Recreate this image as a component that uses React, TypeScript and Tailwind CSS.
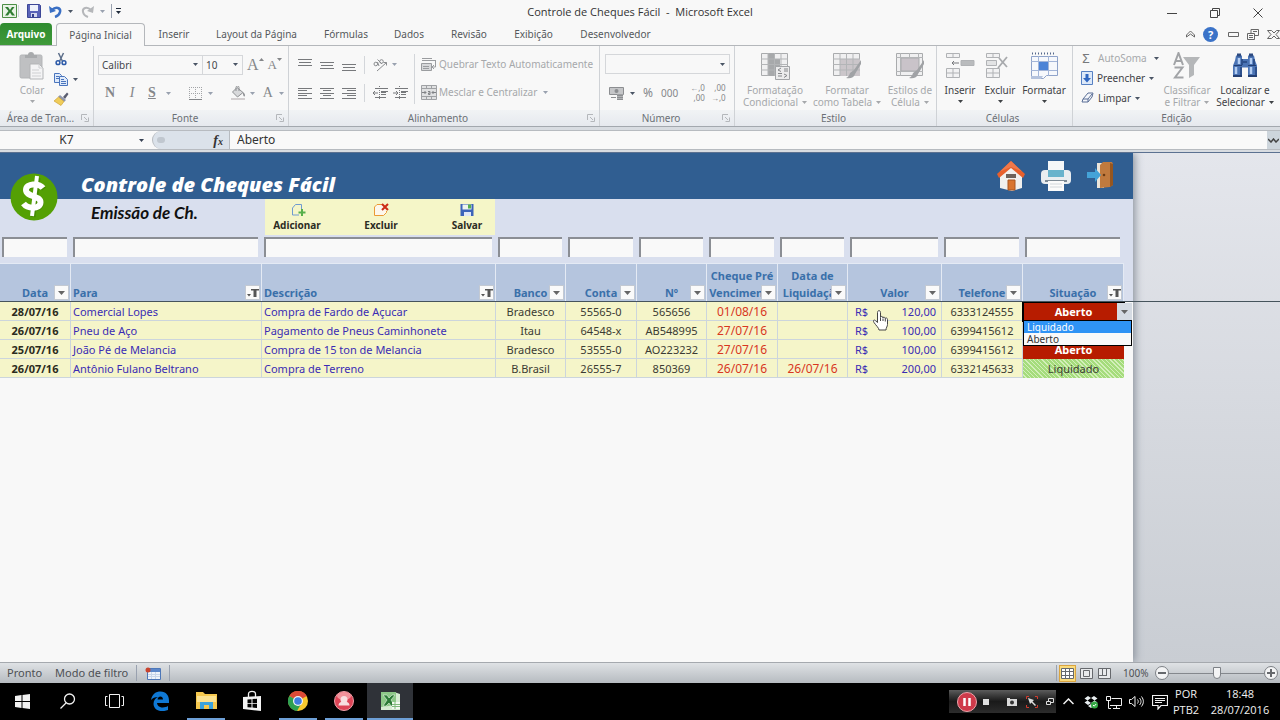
import type { ReactNode } from "react";
import { clsx } from "clsx";

/* ---------- small shared pieces ---------- */

function Caret({ className = "text-gray-600" }: { className?: string }) {
  return (
    <svg viewBox="0 0 5 3" className={clsx("h-[3px] w-[5px] shrink-0", className)} fill="currentColor">
      <path d="M0 0h5L2.5 3z" />
    </svg>
  );
}

function Launcher() {
  return (
    <svg viewBox="0 0 8 8" className="h-2 w-2" fill="none" stroke="#b4b7bb">
      <path d="M.5 6V.5H6M3 3l3 3M7.500 3.500V7.500H3.500" />
    </svg>
  );
}

function Separator() {
  return <span className="h-[18px] w-px shrink-0 bg-[#d3d6da]" />;
}

interface GroupProps {
  label: string;
  className: string;
  bodyClassName?: string;
  launcher?: boolean;
  children: ReactNode;
}

function Group({ label, className, bodyClassName, launcher, children }: GroupProps) {
  return (
    <section className={clsx("flex shrink-0 flex-col border-r border-[#cfd2d6]", className)}>
      <div className={clsx("h-[64px] pt-1.5", bodyClassName)}>{children}</div>
      <div className="flex h-4 items-center bg-gradient-to-b from-[#f1f3f5] to-[#e6e9ee] pr-1">
        <span className="flex-1 whitespace-nowrap text-center text-[#6b7076]">{label}</span>
        {launcher && (
          <button aria-label={`Opções de ${label}`}>
            <Launcher />
          </button>
        )}
      </div>
    </section>
  );
}

interface BigButtonProps {
  icon: ReactNode;
  lines: string[];
  disabled?: boolean;
  className?: string;
}

function BigButton({ icon, lines, disabled, className }: BigButtonProps) {
  const last = lines.length - 1;
  return (
    <button
      className={clsx(
        "flex shrink-0 flex-col items-center whitespace-nowrap leading-3",
        disabled ? "text-[#a6a8ab]" : "text-[#3f4246]",
        className,
      )}
    >
      <span className="mb-1 flex h-7 items-center">{icon}</span>
      {lines.map((line, i) => (
        <span key={line} className="flex items-center gap-1">
          {line}
          {i === last && last > 0 && <Caret className="text-current" />}
        </span>
      ))}
      {last === 0 && <Caret className="mt-1 text-current" />}
    </button>
  );
}

/* ---------- ribbon icons ---------- */

function AlignIcon({ rows }: { rows: [number, number, number][] }) {
  return (
    <svg viewBox="0 0 14 14" className="h-[14px] w-[14px]" stroke="#77797c">
      {rows.map(([x1, x2, y]) => (
        <path key={y} d={`M${x1} ${y}.5H${x2}`} />
      ))}
    </svg>
  );
}

const topAlign: [number, number, number][] = [[0, 14, 1], [1, 13, 4], [0, 14, 7]];
const middleAlign: [number, number, number][] = [[0, 14, 4], [1, 13, 7], [0, 14, 10]];
const bottomAlign: [number, number, number][] = [[0, 14, 6], [1, 13, 9], [0, 14, 12]];
const leftAlign: [number, number, number][] = [[0, 14, 2], [0, 9, 4], [0, 14, 7], [0, 9, 9], [0, 14, 12]];
const centerAlign: [number, number, number][] = [[0, 14, 2], [3, 11, 4], [0, 14, 7], [3, 11, 9], [0, 14, 12]];
const rightAlign: [number, number, number][] = [[0, 14, 2], [5, 14, 4], [0, 14, 7], [5, 14, 9], [0, 14, 12]];

function IndentIcon({ flip }: { flip?: boolean }) {
  return (
    <svg viewBox="0 0 16 14" className="h-[14px] w-4" fill="none" stroke="#77797c">
      <path d="M6.500 0v14" strokeDasharray="1 1" />
      <path d="M2 2.500h13M8 5.500h7M8 8.500h5M2 11.500h11" />
      <path d="M8 6.500h5" />
      <path d={flip ? "M0 7h5M3 5l2 2-2 2" : "M5 7H0M2 5L0 7l2 2"} />
    </svg>
  );
}

function PasteIcon() {
  return (
    <svg viewBox="0 0 26 28" className="h-7 w-[26px]">
      <rect x="1" y="3" width="22" height="23" rx="1.500" fill="#bfc0c2" stroke="#b3b5b7" />
      <path d="M6 6V3h3a3 3 0 0 1 6 0h3v3z" fill="#a8aaac" />
      <path d="M11 12h9l4 4v11H11z" fill="#f4f4f5" stroke="#b3b5b7" />
      <path d="M20 12v4h4M13 18h7M13 21h9M13 24h9" stroke="#cfd0d2" fill="none" />
    </svg>
  );
}

function CutIcon() {
  return (
    <svg viewBox="0 0 12 14" className="h-[14px] w-3" fill="none" strokeWidth="1.500">
      <path d="M3.500 1l3.800 8M8.500 1L4.700 9" stroke="#5d6f8a" />
      <circle cx="3" cy="10.700" r="1.900" stroke="#2c5aa8" />
      <circle cx="9" cy="10.700" r="1.900" stroke="#2c5aa8" />
    </svg>
  );
}

function CopyIcon() {
  return (
    <svg viewBox="0 0 16 14" className="h-[14px] w-4" stroke="#4a75bd">
      <path d="M1.500 1.500h5l2 2v7h-7z" fill="#dfeafa" />
      <path d="M3 4.500h3M3 6.500h4" />
      <path d="M6.500 4.500h5l3 3v6h-8z" fill="#dfeafa" />
      <path d="M8 7.500h3M8 9.500h5M8 11.500h5" />
    </svg>
  );
}

function BrushIcon() {
  return (
    <svg viewBox="0 0 16 14" className="h-[14px] w-4">
      <path d="M10 5l4-4.500 1.500 1.500L12 7z" fill="#5a5d70" />
      <path d="M7 3l6 5-2 2-6-5z" fill="#8f96ac" />
      <path d="M5.500 5L11 9.500 8 13.500 1 9z" fill="#f0cd5a" stroke="#c99b2a" strokeWidth=".6" />
    </svg>
  );
}

function BorderIcon() {
  return (
    <svg viewBox="0 0 13 13" className="h-[13px] w-[13px]" stroke="#a3a5a8" fill="none">
      <path d="M.5 0v12M6.500 0v12M12.500 0v12M0 .5h13M0 6.500h13" strokeDasharray="1 1" />
      <path d="M0 12.500h13" stroke="#85878a" />
    </svg>
  );
}

function BucketIcon() {
  return (
    <svg viewBox="0 0 15 14" className="h-[14px] w-[15px]">
      <path d="M6 1.500l6 5-5.500 4.500-5-5z" fill="#d8d9db" stroke="#8e9093" />
      <path d="M5 5V1.500a1.500 1.500 0 0 1 3 0V5" stroke="#8e9093" fill="none" />
      <path d="M12 6c2 2 2.500 3 1.500 4.500C12 10.500 12 8 12 6z" fill="#8e9093" />
      <path d="M0 12h14v2H0z" fill="#d3cfd0" />
    </svg>
  );
}

function OrientationIcon() {
  return (
    <svg viewBox="0 0 15 14" className="h-[14px] w-[15px]" fill="none" stroke="#8a8c8f">
      <path d="M4 13L13.500 4.500M13.500 4.500h-3M13.500 4.500v3" />
      <circle cx="2.800" cy="6" r="1.800" />
      <path d="M4.500 4l1.500 4M4.500 1.500L9 6" />
      <circle cx="8.500" cy="3.500" r="1.800" />
    </svg>
  );
}

function WrapIcon() {
  return (
    <svg viewBox="0 0 16 15" className="h-[15px] w-4 shrink-0" fill="none" stroke="#9a9c9f">
      <path d="M1 1.500h10M1 3.500h14" />
      <path d="M.5 6.500h10v7H.5z" fill="#d7d8da" />
      <path d="M2 9.500h6M2 11.500h6" />
      <path d="M14.500 4v6h-3M13 8l-2 2 2 2" />
    </svg>
  );
}

function MergeIcon() {
  return (
    <svg viewBox="0 0 16 15" className="h-[15px] w-4 shrink-0" fill="none" stroke="#9fa1a4">
      <path d="M.5.5h15v14H.5z" fill="#e0e1e2" />
      <path d="M0 3.500h16M0 11.500h16M5.500 0v3M10.500 0v3M5.500 12v3M10.500 12v3" />
      <path d="M1 7.500h4M3.500 6L5 7.500 3.500 9M15 7.500h-4M12.500 6L11 7.500 12.500 9M7 6.500h2v3H7.500v-1.500H9" stroke="#808285" />
    </svg>
  );
}

function MoneyIcon() {
  return (
    <svg viewBox="0 0 17 15" className="h-[15px] w-[17px]">
      <path d="M.5 1.500h14v7H.5z" fill="#c5c6c8" stroke="#8c8e91" />
      <circle cx="7.500" cy="5" r="2" fill="#8c8e91" />
      <path d="M8 8.500h6v5H8z" fill="#b1b3b5" />
      <path d="M8 9.500h6M8 11.500h6M8 13.500h6M2 11.500h5" stroke="#8c8e91" />
    </svg>
  );
}

function DecimalButton({ grow }: { grow?: boolean }) {
  return (
    <button
      className="flex flex-col text-right text-[8px] leading-[10px] text-[#85878a]"
      aria-label={grow ? "Aumentar casas decimais" : "Diminuir casas decimais"}
    >
      <span>{grow ? "←,0" : ",00"}</span>
      <span>{grow ? ",00" : "→,0"}</span>
    </button>
  );
}

function GridIcon({ variant }: { variant: "conditional" | "table" | "styles" }) {
  return (
    <svg viewBox="0 0 30 28" className="h-7 w-[30px]">
      <path d="M1.500 1.500h26v22h-26z" fill="#f0f0f1" stroke="#a9abad" />
      {variant === "conditional" && <path d="M8 2h6v5h6v10h-6v7H8z" fill="#a7a9ab" />}
      {variant === "table" && <path d="M8 7h20v17H8z" fill="#cbc6ca" />}
      {variant === "styles" && <path d="M6 6h18v13H6z" fill="#c9c3c9" stroke="#a9abad" />}
      <path
        d={variant === "styles" ? "M5.500 1v4M14.500 1v4M23.500 1v4M1 5.500h27M1 19.500h27M5.500 5v19" : "M8 1v23M14.500 1v23M21 1v23M1 7h27M1 12.500h27M1 18h27"}
        stroke="#b3b5b7"
      />
      {variant === "conditional" ? (
        <g>
          <path d="M15.500 14.500h14v13h-14z" fill="#ececed" stroke="#a3a5a8" />
          <path d="M21 16l-3 2 3 1.500M18 21.500h4M18 24h4M24 17h4M24 19h4M24 22l3 1.500-3 2" stroke="#85878a" fill="none" />
        </g>
      ) : (
        <path d="M29 8l-7 10-4 3c-1 3-2 4-4 5 4 1 8 0 9-4l6-10z" fill="#a0a2a5" />
      )}
    </svg>
  );
}

function CellsIcon({ variant }: { variant: "insert" | "delete" }) {
  return (
    <svg viewBox="0 0 30 28" className="h-7 w-[30px]" fill="none" stroke="#b0b2b5">
      <path d="M1.500 1.500h13v4h-13zM8 1v4M1.500 16.500h13v9h-13zM8 16v9M1 21h14" fill="#f2f2f3" />
      {variant === "insert" ? (
        <g>
          <path d="M16 8.500h13v5H16z" fill="#b9bbbd" />
          <path d="M14 11H7M9 9l-2 2 2 2" stroke="#77797c" />
        </g>
      ) : (
        <g>
          <path d="M1.500 8.500h10v5h-10z" fill="#e2e3e4" />
          <path d="M14 6l8 9M22 5l-9 11" stroke="#a8aaad" strokeWidth="1.800" />
        </g>
      )}
    </svg>
  );
}

function FormatIcon() {
  return (
    <svg viewBox="0 0 30 28" className="h-7 w-[30px]">
      <path d="M3 1.500h23" stroke="#55688c" strokeWidth="2" strokeDasharray="1 2" />
      <path d="M2.500 4.500h26v19h-11l-3 3h-12z" fill="#f6f8fc" stroke="#8fa3ca" />
      <path d="M9.500 4v20M19.500 4v20M2 9.500h26M2 18.500h26" stroke="#a3b5d8" />
      <path d="M10 10h9v8h-9z" fill="#4c83d6" />
      <path d="M2 24h12l-2 3H2z" fill="#b4c2dd" />
    </svg>
  );
}

function SortIcon() {
  return (
    <svg viewBox="0 0 30 28" className="h-7 w-[30px]">
      <path d="M2 13L6.500 1 11 13M3.500 9h6" fill="none" stroke="#a2a4a7" strokeWidth="2" />
      <path d="M2.500 15.500h8L3 25.500h8.500" fill="none" stroke="#a2a4a7" strokeWidth="2" />
      <path d="M11 5h17l-6 8v10l-5 3V13z" fill="#b5b7b9" />
    </svg>
  );
}

function BinocularsIcon() {
  return (
    <svg viewBox="0 0 28 28" className="h-7 w-7">
      <path d="M5 3.500h6V7h6V3.500h6l1 5 2 5v11h-9v-9h-6v9H2v-11l2-5z" fill="#4a73b4" />
      <path d="M6 1.500h4v3H6zM18 1.500h4v3h-4z" fill="#2d4a80" />
      <path d="M5 15v7M8 6v6M20 15v7M20 6v6" stroke="#b3cdf2" strokeWidth="2.500" />
      <path d="M10 15v8M25 15v8M11 7v6M23 7v6M12 10h4" stroke="#24467f" strokeWidth="1.500" />
      <path d="M2 23h9v2H2zM17 23h9v2h-9zM3 13h8v1H3zM17 13h8v1h-8z" fill="#233f73" />
    </svg>
  );
}

/* ---------- title bar and tabs ---------- */

function TitleBar() {
  return (
    <header className="flex h-[22px] items-center px-0.5">
      <div className="flex flex-1 items-center">
        <svg viewBox="0 0 16 16" className="h-4 w-4">
          <path d="M.5 1.500h14v13H.5z" fill="#e9f3e6" stroke="#4c8f45" />
          <path d="M3 4h3l2 3 2-3h2.500L9.500 8l3.500 4.500h-3L8 9.500 6 12.500H3L6.500 8z" fill="#2f7d32" />
        </svg>
        <span className="h-3 w-px bg-gray-300" />
        <button aria-label="Salvar arquivo" className="ml-2">
          <svg viewBox="0 0 14 14" className="h-[14px] w-[14px]">
            <path d="M.5.5h12l1 1v12H.5z" fill="#5a63b8" stroke="#3c4696" />
            <path d="M3 1h8v6H3z" fill="#eef1fa" />
            <path d="M4 9h6v4H4z" fill="#d5d9ee" />
            <path d="M5 10h2v3H5z" fill="#343e8c" />
          </svg>
        </button>
        <button aria-label="Desfazer" className="ml-2 flex items-center gap-1.5">
          <svg viewBox="0 0 13 13" className="h-[13px] w-[13px]" fill="none">
            <path d="M3 5c4-4 9-2 8 2-.5 2-2 4-5 5" stroke="#3a6fc4" strokeWidth="2.500" />
            <path d="M0 1l1 7 6-2z" fill="#3a6fc4" />
          </svg>
          <Caret />
        </button>
        <button aria-label="Refazer" className="ml-2 flex items-center gap-1.5">
          <svg viewBox="0 0 13 13" className="h-[13px] w-[13px]" fill="none">
            <path d="M10 5C6 1 1 3 2 7c.5 2 2 4 5 5" stroke="#b5b7ba" strokeWidth="2" />
            <path d="M13 1l-1 7-6-2z" fill="#b5b7ba" />
          </svg>
          <Caret className="text-gray-400" />
        </button>
        <span className="ml-1.5 h-3.5 w-px bg-gray-400" />
        <button aria-label="Personalizar barra" className="ml-1 flex flex-col gap-0.5">
          <span className="h-px w-[5px] bg-gray-800" />
          <Caret className="text-gray-800" />
        </button>
      </div>
      <h1 className="pt-0.5 font-['Open_Sans',sans-serif] text-[11px] text-[#333]">
        Controle de Cheques Fácil&nbsp; -&nbsp; Microsoft Excel
      </h1>
      <div className="flex flex-1 items-center justify-end gap-[33px] pt-1">
        <button aria-label="Minimizar">
          <svg viewBox="0 0 10 10" className="h-2.5 w-2.5" stroke="#444"><path d="M0 5.500h10" /></svg>
        </button>
        <button aria-label="Restaurar">
          <svg viewBox="0 0 10 10" className="h-2.5 w-2.5" stroke="#444" fill="none">
            <path d="M.5 2.500h7v7h-7zM2.500 2V.5h7v7H8" />
          </svg>
        </button>
        <button aria-label="Fechar" className="mr-[15px]">
          <svg viewBox="0 0 10 10" className="h-2.5 w-2.5" stroke="#444"><path d="M.5.5l9 9M9.500.5l-9 9" /></svg>
        </button>
      </div>
    </header>
  );
}

const tabs = [
  { label: "Inserir", className: "w-[58px]" },
  { label: "Layout da Página", className: "w-[107px]" },
  { label: "Fórmulas", className: "w-[72px]" },
  { label: "Dados", className: "w-[54px]" },
  { label: "Revisão", className: "w-[66px]" },
  { label: "Exibição", className: "w-[63px]" },
  { label: "Desenvolvedor", className: "w-[101px]" },
];

function TabBar() {
  return (
    <nav className="flex h-6 items-end border-b border-[#b4b7bb] text-[10px] text-[#55585c]">
      <button className="h-[22px] w-[52px] rounded-t-sm bg-gradient-to-b from-[#2e8b2f] to-[#3f9a3a] font-bold text-white">
        Arquivo
      </button>
      <button className="-mb-px ml-1 h-[23px] w-[89px] rounded-t border border-b-0 border-[#b4b7bb] bg-[#f8f8f8]">
        Página Inicial
      </button>
      {tabs.map((tab) => (
        <button key={tab.label} className={clsx("h-[22px] whitespace-nowrap", tab.className)}>
          {tab.label}
        </button>
      ))}
      <div className="flex h-[22px] flex-1 items-center justify-end gap-2">
        <button aria-label="Minimizar faixa">
          <svg viewBox="0 0 9 8" className="h-2 w-[9px]" fill="none" stroke="#666"><path d="M.5 5l4-4 4 4v2l-4-3-4 3z" /></svg>
        </button>
        <button aria-label="Ajuda" className="h-[15px] w-[15px] rounded-full bg-[#3b73c8] text-[11px] font-bold leading-[15px] text-white">
          ?
        </button>
        <button aria-label="Minimizar pasta" className="ml-0.5">
          <svg viewBox="0 0 11 5" className="h-[5px] w-[11px]" fill="none" stroke="#666"><path d="M.5.5h10v4H.5z" /></svg>
        </button>
        <button aria-label="Restaurar pasta">
          <svg viewBox="0 0 12 11" className="h-[11px] w-3" fill="none" stroke="#666">
            <path d="M.5 4.500h7v6h-7zM4 4V.5h7.500v6H8M2 6.500h4M2 8.500h4M6 2.500h4" />
          </svg>
        </button>
        <button aria-label="Fechar pasta">
          <svg viewBox="0 0 13 9" className="h-[9px] w-[13px]" fill="none" stroke="#666">
            <path d="M.5.5h4l2.500 2.500L9.500.5h3L9 4.500l3.500 4h-3L7 6 4.500 8.500h-4L4 4.500z" />
          </svg>
        </button>
      </div>
    </nav>
  );
}

/* ---------- ribbon ---------- */

function Ribbon() {
  return (
    <div className="flex bg-[#f8f8f8] text-[10px] leading-4 text-[#a6a8ab]">
      <Group label="Área de Tran..." className="w-[94px]" bodyClassName="flex gap-2 pl-[19px]" launcher>
        <BigButton icon={<PasteIcon />} lines={["Colar"]} disabled />
        <div className="flex flex-col gap-1.5">
          <button aria-label="Recortar" className="pl-0.5"><CutIcon /></button>
          <button aria-label="Copiar" className="flex items-center gap-1"><CopyIcon /><Caret /></button>
          <button aria-label="Pincel"><BrushIcon /></button>
        </div>
      </Group>

      <Group label="Fonte" className="w-[195px]" bodyClassName="flex flex-col gap-2 pl-1" launcher>
        <div className="flex h-[23px] items-center pt-0.5">
          <label className="relative flex h-5 w-[105px] shrink-0 items-center border border-[#d5d7da]">
            <select aria-label="Fonte" className="w-full appearance-none bg-transparent px-[3px] text-[#44474b]">
              <option>Calibri</option>
            </select>
            <Caret className="absolute right-1 text-gray-600" />
          </label>
          <label className="relative flex h-5 w-10 shrink-0 items-center border border-l-0 border-[#d5d7da]">
            <select aria-label="Tamanho" className="w-full appearance-none bg-transparent px-[3px] text-[#44474b]">
              <option>10</option>
            </select>
            <Caret className="absolute right-1 text-gray-600" />
          </label>
          <button aria-label="Aumentar fonte" className="ml-1 flex items-center font-['Liberation_Serif',serif] text-[16px] text-[#85878a]">
            A
            <svg viewBox="0 0 5 3" className="mb-2.5 h-[3px] w-[5px]" fill="#85878a"><path d="M0 3h5L2.500 0z" /></svg>
          </button>
          <button aria-label="Diminuir fonte" className="ml-1 flex items-center font-['Liberation_Serif',serif] text-[13px] text-[#85878a]">
            A<Caret className="mb-2.5 text-[#85878a]" />
          </button>
        </div>
        <div className="flex h-5 items-center font-['Liberation_Serif',serif] text-[14px] text-[#85878a]">
          <button className="ml-1 w-4 font-bold">N</button>
          <button className="ml-1.5 w-4 italic">I</button>
          <button className="ml-2 flex items-center gap-2.5"><span className="font-bold underline">S</span><Caret className="text-gray-400" /></button>
          <span className="ml-2.5 mr-2"><Separator /></span>
          <button aria-label="Bordas" className="flex items-center gap-1.5"><BorderIcon /><Caret className="text-gray-400" /></button>
          <span className="ml-2.5 mr-2"><Separator /></span>
          <button aria-label="Cor de preenchimento" className="flex items-center gap-1"><BucketIcon /><Caret className="text-gray-400" /></button>
          <button className="ml-2 flex items-center gap-1.5">A<Caret className="text-gray-400" /></button>
        </div>
      </Group>

      <Group label="Alinhamento" className="w-[311px]" bodyClassName="flex pl-[9px]" launcher>
        <div className="flex w-[116px] shrink-0 flex-col gap-2">
          <div className="flex h-[23px] items-center gap-2 pt-0.5">
            <button aria-label="Alinhar acima"><AlignIcon rows={topAlign} /></button>
            <button aria-label="Alinhar no meio"><AlignIcon rows={middleAlign} /></button>
            <button aria-label="Alinhar abaixo"><AlignIcon rows={bottomAlign} /></button>
            <Separator />
            <button aria-label="Orientação" className="flex items-center gap-1"><OrientationIcon /><Caret className="text-gray-400" /></button>
          </div>
          <div className="flex h-5 items-center gap-2">
            <button aria-label="Esquerda"><AlignIcon rows={leftAlign} /></button>
            <button aria-label="Centro"><AlignIcon rows={centerAlign} /></button>
            <button aria-label="Direita"><AlignIcon rows={rightAlign} /></button>
            <Separator />
            <button aria-label="Diminuir recuo"><IndentIcon /></button>
            <button aria-label="Aumentar recuo" className="-ml-1"><IndentIcon flip /></button>
          </div>
        </div>
        <div className="mt-0.5 flex h-[50px] flex-col gap-2 border-l border-[#d3d6da] pl-1.5">
          <button className="flex h-[20px] items-center gap-0.5 whitespace-nowrap"><WrapIcon />Quebrar Texto Automaticamente</button>
          <button className="flex h-5 items-center gap-0.5 whitespace-nowrap"><MergeIcon />Mesclar e Centralizar<Caret className="ml-1 text-gray-400" /></button>
        </div>
      </Group>

      <Group label="Número" className="w-[135px]" bodyClassName="flex flex-col gap-2 pl-[5px] pr-1" launcher>
        <div className="h-[23px] pt-0.5">
          <label className="relative flex h-5 items-center border border-[#d5d7da]">
            <select aria-label="Formato de número" className="w-full appearance-none bg-transparent">
              <option></option>
            </select>
            <Caret className="absolute right-1 text-gray-600" />
          </label>
        </div>
        <div className="flex h-5 items-center pl-1 text-[12px] text-[#85878a]">
          <button aria-label="Moeda" className="flex items-center gap-1"><MoneyIcon /><Caret /></button>
          <button className="ml-2">%</button>
          <button className="ml-2 text-[10px]">000</button>
          <span className="mx-1.5"><Separator /></span>
          <div className="flex gap-1.5"><DecimalButton grow /><DecimalButton /></div>
        </div>
      </Group>

      <Group label="Estilo" className="w-[202px]" bodyClassName="flex gap-1 pl-1.5">
        <BigButton icon={<GridIcon variant="conditional" />} lines={["Formatação", "Condicional"]} disabled className="w-[68px]" />
        <BigButton icon={<GridIcon variant="table" />} lines={["Formatar", "como Tabela"]} disabled className="w-[68px]" />
        <BigButton icon={<GridIcon variant="styles" />} lines={["Estilos de", "Célula"]} disabled className="w-[50px]" />
      </Group>

      <Group label="Células" className="w-[136px]" bodyClassName="flex gap-0.5 pl-1">
        <BigButton icon={<CellsIcon variant="insert" />} lines={["Inserir"]} className="w-[38px]" />
        <BigButton icon={<CellsIcon variant="delete" />} lines={["Excluir"]} className="w-[38px]" />
        <BigButton icon={<FormatIcon />} lines={["Formatar"]} className="w-[46px]" />
      </Group>

      <section className="flex min-w-0 flex-1 flex-col">
        <div className="flex h-[64px] pt-1.5">
          <div className="-mt-0.5 flex w-[87px] shrink-0 flex-col gap-1 pl-2 text-[#3f4246]">
            <button className="flex items-center gap-[7px] text-[#a6a8ab]">
              <span className="w-2.5 text-[13px] leading-4 text-[#77797c]">Σ</span>AutoSoma<Caret />
            </button>
            <button className="flex items-center gap-1">
              <svg viewBox="0 0 12 14" className="h-[14px] w-3">
                <path d="M.5.5h11v13H.5z" fill="#dce8f8" stroke="#5680c2" />
                <path d="M4.500 3h3v4H10l-4 4.500L2 7h2.500z" fill="#2f66c0" />
              </svg>
              Preencher<Caret />
            </button>
            <button className="flex items-center gap-1">
              <svg viewBox="0 0 13 12" className="h-3 w-[13px]">
                <path d="M7 1h5l-1 4-4 5H1l1-3z" fill="#f4f6fb" stroke="#5b6f96" />
                <path d="M2 7h5l4-5M7 7v3" fill="none" stroke="#5b6f96" />
              </svg>
              Limpar<Caret />
            </button>
          </div>
          <BigButton icon={<SortIcon />} lines={["Classificar", "e Filtrar"]} disabled className="w-[54px]" />
          <BigButton icon={<BinocularsIcon />} lines={["Localizar e", "Selecionar"]} className="w-[62px]" />
        </div>
        <div className="h-4 bg-gradient-to-b from-[#f1f3f5] to-[#e6e9ee] text-center text-[#6b7076]">Edição</div>
      </section>
    </div>
  );
}

function FormulaBar() {
  return (
    <div className="border-t border-[#a3a8ae] bg-[#d8dce1] pb-0.5 pt-[3px]">
      <div className="flex h-5 border-y border-[#b7bbc0] bg-[#f9f9f9] text-[12px] text-[#333]">
        <label className="flex w-[152px] items-center pr-2">
          <input aria-label="Caixa de nome" defaultValue="K7" className="min-w-0 flex-1 bg-transparent pr-1.5 text-center" />
          <Caret className="text-gray-700" />
        </label>
        <div className="flex w-[78px] items-center justify-between rounded-l-full border-l border-r border-[#b7bbc0] bg-[#dbe2ea] pl-1 pr-1.5">
          <span className="h-1.5 w-2 rounded-full bg-[#c0c7cf]" />
          <button aria-label="Inserir função" className="font-['Liberation_Serif',serif] text-[14px] font-bold italic">
            f<span className="text-[10px]">x</span>
          </button>
        </div>
        <input aria-label="Fórmula" defaultValue="Aberto" className="min-w-0 flex-1 bg-transparent px-[7px]" />
        <button aria-label="Expandir" className="flex w-[13px] items-center justify-center bg-[#cdd5dc]">
          <svg viewBox="0 0 11 5" className="h-[5px] w-[11px]" fill="none" stroke="#444" strokeWidth="1.500"><path d="M0 1l3 3 2.500-3L8 4l3-3" /></svg>
        </button>
      </div>
    </div>
  );
}

/* ---------- spreadsheet ---------- */

interface Column {
  header: string[];
  filtered?: boolean;
  left?: boolean;
  width: string;
}

const columns: Column[] = [
  { header: ["Data"], width: "w-[71px]" },
  { header: ["Para"], width: "w-[191px]", filtered: true, left: true },
  { header: ["Descrição"], width: "", filtered: true, left: true },
  { header: ["Banco"], width: "w-[70px]" },
  { header: ["Conta"], width: "w-[71px]" },
  { header: ["Nº"], width: "w-[70px]" },
  { header: ["Cheque Pré", "Vencimento"], width: "w-[71px]" },
  { header: ["Data de", "Liquidação"], width: "w-[70px]" },
  { header: ["Valor"], width: "w-[94px]" },
  { header: ["Telefone"], width: "w-[81px]" },
  { header: ["Situação"], width: "w-[101px]", filtered: true },
];

interface Cheque {
  data: string;
  para: string;
  descricao: string;
  banco: string;
  conta: string;
  numero: string;
  vencimento: string;
  liquidacao: string;
  valor: string;
  telefone: string;
  situacao: "Aberto" | "Liquidado";
}

const cheques: Cheque[] = [
  { data: "28/07/16", para: "Comercial Lopes", descricao: "Compra de Fardo de Açucar", banco: "Bradesco", conta: "55565-0", numero: "565656", vencimento: "01/08/16", liquidacao: "", valor: "120,00", telefone: "6333124555", situacao: "Aberto" },
  { data: "26/07/16", para: "Pneu de Aço", descricao: "Pagamento de Pneus Caminhonete", banco: "Itau", conta: "64548-x", numero: "AB548995", vencimento: "27/07/16", liquidacao: "", valor: "100,00", telefone: "6399415612", situacao: "Aberto" },
  { data: "25/07/16", para: "João Pé de Melancia", descricao: "Compra de 15 ton de Melancia", banco: "Bradesco", conta: "53555-0", numero: "AO223232", vencimento: "27/07/16", liquidacao: "", valor: "100,00", telefone: "6399415612", situacao: "Aberto" },
  { data: "26/07/16", para: "Antônio Fulano Beltrano", descricao: "Compra de Terreno", banco: "B.Brasil", conta: "26555-7", numero: "850369", vencimento: "26/07/16", liquidacao: "26/07/16", valor: "200,00", telefone: "6332145633", situacao: "Liquidado" },
];

function FilterButton({ label, filtered }: { label: string; filtered?: boolean }) {
  return (
    <button
      aria-label={`Filtrar ${label}`}
      className="absolute bottom-0.5 right-px flex h-[15px] w-[15px] items-center justify-center border border-[#c3c9d2] bg-[#fafafa]"
    >
      {filtered ? (
        <svg viewBox="0 0 12 10" className="h-2.5 w-3" fill="#555"><path d="M4 1h8v1.500H9.500V9h-3V2.500H4zM0 6h4L2 8.500z" /></svg>
      ) : (
        <svg viewBox="0 0 7 4" className="h-1 w-[7px]" fill="#666"><path d="M0 0h7L3.500 4z" /></svg>
      )}
    </button>
  );
}

function HandCursor() {
  return (
    <svg viewBox="0 0 16 21" className="absolute left-6 top-2 z-20 h-[21px] w-4" fill="#fff" stroke="#444">
      <path d="M5.500 12.500v-10c0-2.500 3-2.500 3 0v5c0-1.500 2.500-1.500 2.500.5 0-1.500 2.300-1 2.300.7 0-1.200 2.200-1 2.200.8v5c0 2-1.500 3-1.500 5.500H7c0-2-3-4.500-5-7.500-1.500-2.500.5-3 1.500-1.800z" />
      <path d="M8.500 8v3M11 8.500V11M13.300 9v2.500" />
    </svg>
  );
}

function StatusList() {
  return (
    <>
      <button
        aria-label="Abrir lista"
        className="absolute left-[94px] top-px z-10 flex h-[17px] w-[15px] items-center justify-center bg-[#d5dbe3]"
      >
        <svg viewBox="0 0 7 4" className="h-1 w-[7px]" fill="#666"><path d="M0 0h7L3.500 4z" /></svg>
      </button>
      <ul
        role="listbox"
        aria-label="Situação"
        className="absolute left-0 top-[18px] z-10 w-[109px] border border-black bg-[#f9f9f9] text-left text-[10px] font-normal leading-3 text-[#333]"
      >
        <li role="option" aria-selected="true" className="bg-[#2f93f5] px-[3px] text-white">Liquidado</li>
        <li role="option" aria-selected="false" className="px-[3px]">Aberto</li>
      </ul>
    </>
  );
}

const cell = "h-[19px] border-b border-r border-[#ccd5dc] p-0 pt-px";

function ChequeRow({ cheque, active }: { cheque: Cheque; active: boolean }) {
  return (
    <tr className="bg-[#f5f5c9] text-center text-[#3b3b33]">
      <td className={clsx(cell, "font-bold text-[#2b2b20]")}>{cheque.data}</td>
      <td className={clsx(cell, "pl-0.5 text-left text-[#3a2cb4]")}>{cheque.para}</td>
      <td className={clsx(cell, "pl-0.5 text-left text-[#3a2cb4]")}>{cheque.descricao}</td>
      <td className={cell}>{cheque.banco}</td>
      <td className={cell}>{cheque.conta}</td>
      <td className={cell}>{cheque.numero}</td>
      <td className={clsx(cell, "text-[12px] text-[#d8371f]")}>{cheque.vencimento}</td>
      <td className={clsx(cell, "text-[12px] text-[#d8371f]")}>{cheque.liquidacao}</td>
      <td className={clsx(cell, "relative text-[#3a2cb4]")}>
        <div className="flex justify-between pl-[7px] pr-[5px]">
          <span>R$</span>
          <span>{cheque.valor}</span>
        </div>
        {active && <HandCursor />}
      </td>
      <td className={cell}>{cheque.telefone}</td>
      <td
        className={clsx(
          "relative h-[19px] p-0",
          cheque.situacao === "Aberto"
            ? "bg-[#b71c00] font-bold text-white"
            : "bg-[repeating-linear-gradient(45deg,#a5dc7c_0px,#a5dc7c_2px,#d3efba_2px,#d3efba_3px)]",
          active && "outline-2 -outline-offset-1 outline-black",
        )}
      >
        {cheque.situacao}
        {active && <StatusList />}
      </td>
    </tr>
  );
}

function SheetBanner() {
  return (
    <div className="relative">
      <div className="flex h-[46px] items-center justify-between bg-[#305e91] pl-[81px] pr-[17px]">
        <h2 className="pt-[18px] font-['Open_Sans',sans-serif] text-[20px] font-extrabold italic leading-7 text-white">
          Controle de Cheques Fácil
        </h2>
        <div className="flex items-center gap-3.5">
          <button aria-label="Início">
            <svg viewBox="0 0 30 32" className="h-8 w-[30px]">
              <path d="M4 14L15 5l11 9v14l-10 3-12-3z" fill="#f1f0ee" />
              <path d="M15 1L1 14l2 4L15 8l12 10 2-4z" fill="#e8602c" />
              <path d="M15 1L4 11.500 15 7l11 4.500z" fill="#f0784a" />
              <path d="M10 14h10v4H10z" fill="#6e625b" />
              <path d="M12 20h7v10h-7z" fill="#d9742f" stroke="#a85420" />
            </svg>
          </button>
          <button aria-label="Imprimir">
            <svg viewBox="0 0 32 32" className="h-8 w-8">
              <path d="M8 1h16v12H8z" fill="#f5f7f8" />
              <rect x="1" y="10" width="30" height="14" rx="4" fill="#e9edf0" />
              <path d="M8 10h16v7H8z" fill="#69b3cc" />
              <path d="M5 20h22v2H5z" fill="#7e8b96" />
              <path d="M8 21h16v10H8z" fill="#fbfbfb" />
              <path d="M10 24h12M10 27h12" stroke="#d3d8dc" />
            </svg>
          </button>
          <button aria-label="Sair">
            <svg viewBox="0 0 30 30" className="h-[30px] w-[30px]">
              <path d="M11 2h7v25h-7z" fill="#ece5da" />
              <path d="M14 4l3-3h9l1 2v21l-3 2-10 1z" fill="#c07a3e" />
              <path d="M24 2l3 1v21l-3 2z" fill="#96561f" />
              <circle cx="18" cy="14" r="1.300" fill="#6b3b12" />
              <path d="M1 11h8V7l6 7-6 7v-4H1z" fill="#44a3d8" />
            </svg>
          </button>
        </div>
      </div>

      <div className="flex h-9 items-start bg-[#d9dfee]">
        <p className="w-[265px] flex-none pl-[91px] font-['Lato',sans-serif] text-[17px] font-bold italic leading-7 text-[#111]">
          Emissão de Ch.
        </p>
        <div className="flex h-9 w-[230px] bg-[#f5f6c8] pt-1 text-[10px] font-bold leading-4 text-[#2c2c24]">
          <button className="flex w-[64px] flex-col items-center">
            <svg viewBox="0 0 16 14" className="ml-1 h-[14px] w-4" fill="none">
              <path d="M4.500 1.500h6v5M4.500 1.500L1.500 5v7H8" stroke="#6f9bd0" />
              <path d="M11 6v7M7.500 9.500h7" stroke="#58b04c" strokeWidth="2" />
            </svg>
            Adicionar
          </button>
          <button className="flex w-[104px] flex-col items-center">
            <svg viewBox="0 0 17 14" className="h-[14px] w-[17px]" fill="none">
              <path d="M9 1.500H4L1.500 4v8.500h9l3-3V8" fill="#fdf7ec" stroke="#eb9a35" />
              <path d="M9 1l6 6M15 1L9 7" stroke="#cc2d16" strokeWidth="2" />
            </svg>
            Excluir
          </button>
          <button className="flex flex-1 flex-col items-center pl-1.5">
            <svg viewBox="0 0 14 13" className="h-[14px] w-[14px]">
              <path d="M.5.5h13v12H.5z" fill="#3c63b9" />
              <path d="M2.500 1h9v5h-9z" fill="#eef5ef" />
              <path d="M8 1h3v4H8z" fill="#56ae4b" />
              <path d="M4 8.500h7v4H4z" fill="#dfe6f5" />
            </svg>
            Salvar
          </button>
        </div>
      </div>

      {/* Logo sits across both bands */}
      <svg viewBox="0 0 48 48" className="absolute left-[10px] top-5 h-12 w-12">
        <circle cx="24" cy="24" r="23.500" fill="#54a004" />
        <path d="M34 16c-4-5-17-5-17 2 0 7 15 5.500 14.500 12.500-.5 7-13 6.500-17 1M28 5l-5 39" stroke="#2f6b00" strokeWidth="5" fill="none" opacity=".4" />
        <path d="M33 15c-4-5-17-5-17 2 0 7 15 5.500 14.500 12.500-.5 7-13 6.500-17 1" stroke="#fff" strokeWidth="6" fill="none" />
        <path d="M27 3l-5 40" stroke="#fff" strokeWidth="4" fill="none" />
      </svg>
    </div>
  );
}

function Sheet() {
  return (
    <main className="relative flex flex-1 overflow-hidden border-t border-[#5b7191]">
      <div className="z-10 flex-1 bg-[#f8f8f8] shadow-[2px_0_8px_#8a929c]">
        <SheetBanner />
        <div className="bg-[linear-gradient(#d9dfee_66px,transparent_66px)] pr-[9px]">
          <table className="w-full table-fixed border-separate border-spacing-0 text-[11px] leading-4">
            <colgroup>
              {columns.map((column) => (
                <col key={column.header[0]} className={column.width} />
              ))}
            </colgroup>
            <thead>
              <tr>
                {columns.map((column) => (
                  <td key={column.header[0]} className="h-7 pb-1.5 pl-0.5 pr-1 pt-0.5 align-top">
                    <input
                      aria-label={`Pesquisar ${column.header.join(" ")}`}
                      className="block h-5 w-full border-l-2 border-t-2 border-[#8b8e94] bg-[#f9f9f9]"
                    />
                  </td>
                ))}
              </tr>
              <tr>
                {columns.map((column) => (
                  <th
                    key={column.header[0]}
                    scope="col"
                    className={clsx(
                      "relative h-[39px] overflow-hidden border-r border-t border-[#e4eaf4] bg-[#b5c5de] p-0 pb-px align-bottom font-bold leading-[17px] text-[#3a70aa]",
                      column.left && "pl-0.5 text-left",
                    )}
                  >
                    {column.header.map((line) => (
                      <span key={line} className="block">{line}</span>
                    ))}
                    <FilterButton label={column.header.join(" ")} filtered={column.filtered} />
                  </th>
                ))}
              </tr>
            </thead>
            <tbody>
              {cheques.map((cheque, i) => (
                <ChequeRow key={cheque.numero} cheque={cheque} active={i === 0} />
              ))}
            </tbody>
          </table>
        </div>
      </div>
      <aside className="w-[147px] bg-gradient-to-b from-[#e4e6ec] to-[#c9cdd3]" />
      {/* Frozen pane line */}
      <div className="absolute inset-x-0 top-[148px] z-10 h-px bg-[#46545c]" />
    </main>
  );
}

/* ---------- status bar and taskbar ---------- */

function StatusBar() {
  return (
    <footer className="flex h-[21px] items-center border-t border-[#a5a9ae] bg-gradient-to-b from-[#dfe2e5] to-[#b6bbc0] text-[11px] text-[#4d5054]">
      <span className="pl-[7px]">Pronto</span>
      <span className="pl-[13px]">Modo de filtro</span>
      <span className="mx-2 h-4 w-px bg-gray-400" />
      <button aria-label="Gravar macro">
        <svg viewBox="0 0 16 13" className="h-[13px] w-4">
          <path d="M2.500 1.500h13v11h-13z" fill="#eef3fb" stroke="#4d77b8" />
          <path d="M3 2h12v3H3z" fill="#5b86c9" />
          <path d="M3 7.500h12M3 9.500h12M6.500 5v7M10.500 5v7" stroke="#c9d6ea" />
          <circle cx="3" cy="3" r="2.500" fill="#c8432e" />
        </svg>
      </button>
      <span className="mx-2 h-4 w-px bg-gray-400" />
      <div className="flex flex-1 items-center justify-end">
        <span className="h-4 w-px bg-gray-400" />
        <button aria-label="Normal" className="ml-0.5 border border-[#d9a441] bg-[#fbdc7c] px-px py-0.5">
          <svg viewBox="0 0 13 11" className="h-[11px] w-[13px]" fill="#fff" stroke="#66696d"><path d="M.5.5h12v10H.5zM4.500 0v11M8.500 0v11M0 3.500h13M0 7.500h13" /></svg>
        </button>
        <button aria-label="Layout da página" className="ml-1">
          <svg viewBox="0 0 13 11" className="h-[11px] w-[13px]" fill="#e8eaec" stroke="#66696d"><path d="M.5.5h12v10H.5zM3.500 2.500h6v6h-6z" /></svg>
        </button>
        <button aria-label="Quebra de página" className="ml-[5px]">
          <svg viewBox="0 0 13 11" className="h-[11px] w-[13px]" fill="#e8eaec" stroke="#66696d"><path d="M.5.5h12v10H.5zM4.500 0v7M8.500 0v7M0 7.500h9" /></svg>
        </button>
        <span className="ml-3 w-[26px] text-[10px]">100%</span>
        <button aria-label="Reduzir" className="ml-1.5 flex h-[14px] w-[14px] items-center justify-center rounded-full border border-[#7d8186] bg-[#f3f4f5]">
          <span className="h-0.5 w-2 bg-[#66696d]" />
        </button>
        <input
          type="range"
          aria-label="Zoom"
          defaultValue={50}
          className="h-3 w-[95px] appearance-none bg-[linear-gradient(#84888d,#84888d)] bg-[length:100%_1px] bg-center bg-no-repeat [&::-webkit-slider-thumb]:h-3 [&::-webkit-slider-thumb]:w-2 [&::-webkit-slider-thumb]:appearance-none [&::-webkit-slider-thumb]:rounded-b [&::-webkit-slider-thumb]:border [&::-webkit-slider-thumb]:border-[#7d8186] [&::-webkit-slider-thumb]:bg-[#f3f4f5]"
        />
        <button aria-label="Ampliar" className="mr-0.5 flex h-[14px] w-[14px] items-center justify-center rounded-full border border-[#7d8186] bg-[#f3f4f5]">
          <svg viewBox="0 0 8 8" className="h-2 w-2" stroke="#66696d" strokeWidth="2"><path d="M4 0v8M0 4h8" /></svg>
        </button>
      </div>
    </footer>
  );
}

interface TaskItem {
  label: string;
  icon: ReactNode;
  running?: boolean;
  active?: boolean;
}

const taskItems: TaskItem[] = [
  {
    label: "Pesquisar",
    icon: (
      <svg viewBox="0 0 16 16" className="h-4 w-4" fill="none" stroke="#f2f2f2" strokeWidth="1.300">
        <circle cx="9.500" cy="6" r="5" />
        <path d="M6 10L.5 15.500" />
      </svg>
    ),
  },
  {
    label: "Visão de tarefas",
    icon: (
      <svg viewBox="0 0 19 14" className="h-[14px] w-[19px]" fill="none" stroke="#f2f2f2">
        <path d="M4.500.5h10v13h-10zM2.500 2.500h-2v9h2M16.500 2.500h2v9h-2" />
      </svg>
    ),
  },
  {
    label: "Edge",
    icon: (
      <svg viewBox="0 0 20 20" className="h-5 w-5" fill="#0f78d4">
        <path d="M1 9C2 3 6 .5 10.500.5 16 .5 19 4.500 19 9.500V12H7c.5 5 7 5.500 11 3v4c-6 2.500-14 1-14.500-6C3.500 9.500 5.500 7 8 6c-3 0-5.500 1-7 3zm6.500-.5H13c0-4-5-4-5.500 0z" />
      </svg>
    ),
  },
  {
    label: "Explorador de Arquivos",
    running: true,
    icon: (
      <svg viewBox="0 0 21 19" className="h-[19px] w-[21px]">
        <path d="M0 1h7l2 2h12v15H0z" fill="#f5c84e" />
        <path d="M1 5h19v6H1z" fill="#fbe291" />
        <path d="M4 18v-7h13v7h-4v-4H8v4z" fill="#3ba3dc" />
      </svg>
    ),
  },
  {
    label: "Loja",
    icon: (
      <svg viewBox="0 0 20 22" className="h-[22px] w-5">
        <path d="M6.500 7V4c0-3.500 7-3.500 7 0v3" fill="none" stroke="#f4f4f4" strokeWidth="1.300" />
        <path d="M1 7l18-1v15L1 19z" fill="#f4f4f4" />
        <path d="M5.500 9.500l4-.3v4h-4zM10.500 9.100l4.500-.3v4.400h-4.500zM5.500 14h4v3.500l-4-.3zM10.500 14H15v4l-4.500-.4z" fill="#000" />
      </svg>
    ),
  },
  {
    label: "Chrome",
    running: true,
    icon: (
      <svg viewBox="0 0 20 20" className="h-5 w-5">
        <circle cx="10" cy="10" r="10" fill="#f7c92f" />
        <path d="M10 10L1.300 5A10 10 0 0 1 18.700 5z" fill="#dc4a37" />
        <path d="M10 10L1.300 5A10 10 0 0 0 9 20l4-7z" fill="#2ea052" />
        <circle cx="10" cy="10" r="5" fill="#f4f4f4" />
        <circle cx="10" cy="10" r="3.800" fill="#3f7de0" />
      </svg>
    ),
  },
  {
    label: "Gravador",
    running: true,
    icon: (
      <svg viewBox="0 0 20 20" className="h-5 w-5">
        <circle cx="10" cy="10" r="9.500" fill="#dd4456" stroke="#f0a2aa" />
        <ellipse cx="10" cy="5" rx="7" ry="4" fill="#f0929b" />
        <path d="M4.500 14.500h11c0-2-1-3-2.500-3.500H7c-1.500.5-2.500 1.500-2.500 3.500z" fill="#f7dfe1" />
        <circle cx="10" cy="8.500" r="3.500" fill="#f7dfe1" />
      </svg>
    ),
  },
  {
    label: "Excel",
    running: true,
    active: true,
    icon: (
      <svg viewBox="0 0 21 20" className="h-5 w-[21px]">
        <path d="M1 1h13l6 2v16H1z" fill="#d6ebd2" />
        <path d="M1 1h15v13L1 16z" fill="#8cc787" />
        <path d="M3 4h4l2 3 3-3h3l-4 5 4 6h-4l-2-3-3 3H3l4-6z" fill="#2b7a36" stroke="#e6f3e4" strokeWidth=".6" />
        <path d="M12 11h8v7h-8z" fill="#f2f8f0" />
        <path d="M12 13.500h8M12 15.500h8M15 11v7" stroke="#7fb97c" />
      </svg>
    ),
  },
];

function Tray() {
  return (
    <div className="flex items-center text-[#f0f0f0]">
      <div className="flex h-[23px] w-[107px] items-center bg-gradient-to-b from-[#5c5c5c] via-[#1a1a1a] to-[#2c2c2c] pl-2">
        <button aria-label="Pausar">
          <svg viewBox="0 0 20 20" className="h-5 w-5">
            <circle cx="10" cy="10" r="9.500" fill="#cf3a4a" stroke="#eea4aa" />
            <path d="M7.500 6v8M12.500 6v8" stroke="#fff" strokeWidth="2.500" />
          </svg>
        </button>
        <button aria-label="Parar" className="ml-1.5 h-1.5 w-1.5 bg-[#e0e0e0]" />
        <button aria-label="Câmera" className="ml-[17px]">
          <svg viewBox="0 0 12 10" className="h-2.5 w-3"><path d="M1 1h3v1h7v7H1z" fill="#d8d8d8" /><circle cx="6" cy="5.500" r="2" fill="#333" /></svg>
        </button>
        <button aria-label="Região" className="ml-2">
          <svg viewBox="0 0 12 12" className="h-3 w-3" fill="none">
            <path d="M.5 3V.5H3M9 .5h2.500V3M11.500 9v2.500H9M3 11.500H.5V9" stroke="#d23b2e" />
            <path d="M2 2l6 2-1.500 1.500L10 9l-1 1-3.500-3.500L4 8z" fill="#ddd" />
          </svg>
        </button>
        <button aria-label="Restaurar gravador" className="ml-2">
          <svg viewBox="0 0 8 8" className="h-2 w-2" fill="none" stroke="#ddd"><path d="M.5 3.500h4v3h-4zM2.500 3V.5h5v4H5" /></svg>
        </button>
      </div>
      <button aria-label="Ícones ocultos" className="ml-[7px]">
        <svg viewBox="0 0 11 7" className="h-[7px] w-[11px]" fill="none" stroke="#f0f0f0" strokeWidth="1.500"><path d="M.5 6l5-5 5 5" /></svg>
      </button>
      <button aria-label="Dropbox" className="ml-2.5">
        <svg viewBox="0 0 14 14" className="h-[14px] w-[14px]" fill="#e8eef0">
          <path d="M4 1l3 2-3.500 2.500L.5 3.500zM10 1l3.500 2.500-3 2L7 3zM.5 7.500l3-2L7 8l-3 2zM7 8l3.500-2.500 3 2L10 10zM4 11l3-2 3 2-3 2z" />
          <circle cx="10.500" cy="10" r="3.500" fill="#35a845" />
          <path d="M9 10l1.200 1.200L12.200 9" fill="none" stroke="#fff" />
        </svg>
      </button>
      <button aria-label="Rede" className="ml-2">
        <svg viewBox="0 0 16 14" className="h-[14px] w-4" fill="none" stroke="#f0f0f0"><path d="M5.500 3.500h10v7H4M10.500 11v2M7 13.500h7M.5 1.500h4v4h-4zM2.500 6v7.500H5" /></svg>
      </button>
      <button aria-label="Volume" className="ml-[7px]">
        <svg viewBox="0 0 15 13" className="h-[13px] w-[15px]" fill="none" stroke="#f0f0f0"><path d="M.5 4.500h2l3.500-3v10l-3.500-3h-2zM8.500 4.500c1 1.500 1 2.500 0 4M10.500 3c2 2.500 2 4.500 0 7M12.500 1.500c2.500 3.500 2.500 6.500 0 10" /></svg>
      </button>
      <button aria-label="Notificações" className="ml-2">
        <svg viewBox="0 0 16 16" className="h-4 w-4" fill="none" stroke="#f0f0f0" strokeWidth="1.200"><path d="M.5 1.500h15v10H9l-3 3.500v-3.500H.5zM3 4.500h10M3 6.500h10M3 8.500h7" /></svg>
      </button>
      <div className="ml-1 w-[28px] text-center font-['Open_Sans',sans-serif] text-[11px] leading-4">
        <p>POR</p>
        <p>PTB2</p>
      </div>
      <time
        className="ml-1 w-[76px] whitespace-nowrap pr-1 text-center font-['Open_Sans',sans-serif] text-[11px] leading-4"
        dateTime="2016-07-28T18:48"
      >
        18:48
        <br />
        28/07/2016
      </time>
    </div>
  );
}

function Taskbar() {
  return (
    <div className="flex h-[37px] bg-black">
      <button aria-label="Iniciar" className="flex w-[45px] items-center justify-center">
        <svg viewBox="0 0 15 15" className="h-[15px] w-[15px]" fill="#f2f2f2">
          <path d="M0 2l6.500-1v6H0zM7.500.9L15 0v7H7.500zM0 8h6.500v6L0 13zM7.500 8H15v7l-7.500-1z" />
        </svg>
      </button>
      {taskItems.map((item) => (
        <button
          key={item.label}
          aria-label={item.label}
          className={clsx("flex w-[46px] justify-center", item.active && "bg-[#2f3238]")}
        >
          <span
            className={clsx(
              "flex h-[37px] items-center justify-center border-b-2",
              item.active ? "w-full" : "w-[38px]",
              item.running ? "border-[#6d9fd6]" : "border-transparent",
            )}
          >
            {item.icon}
          </span>
        </button>
      ))}
      <div className="flex flex-1 justify-end">
        <Tray />
      </div>
    </div>
  );
}

export default function App() {
  return (
    <div className="flex min-h-screen flex-col bg-[#f8f8f8] font-['Noto_Sans','Open_Sans',sans-serif]">
      <TitleBar />
      <TabBar />
      <Ribbon />
      <FormulaBar />
      <Sheet />
      <StatusBar />
      <Taskbar />
    </div>
  );
}
